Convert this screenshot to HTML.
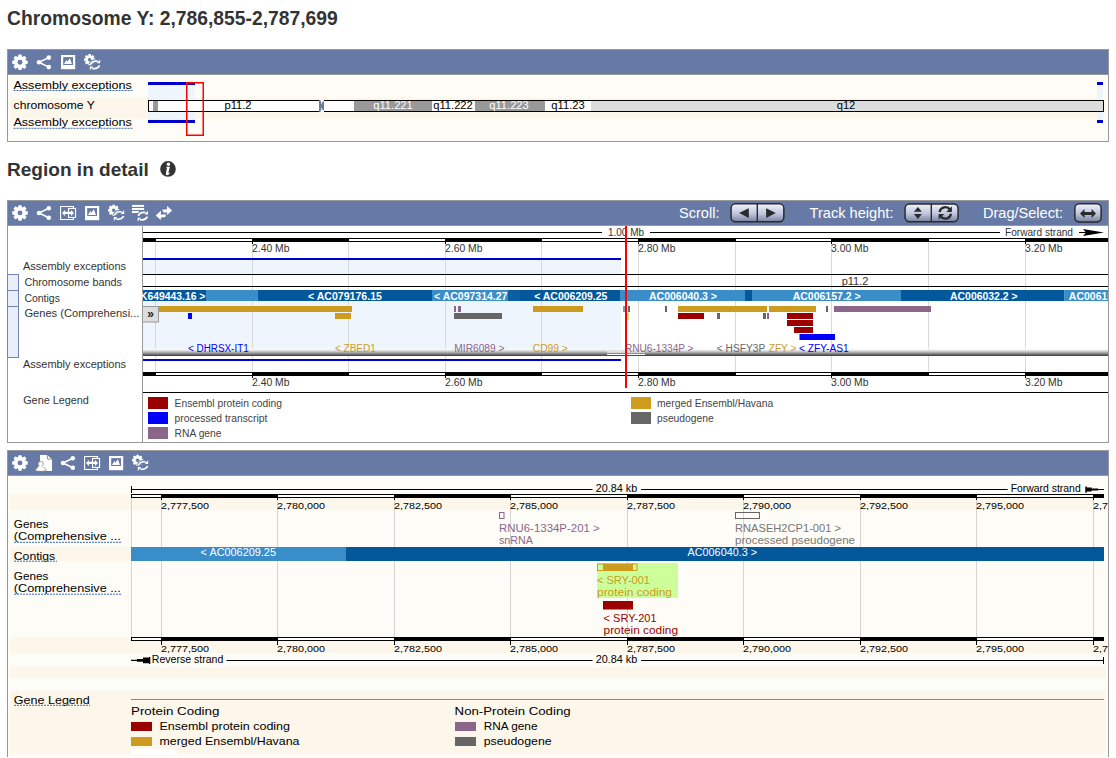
<!DOCTYPE html><html><head><meta charset="utf-8"><style>html,body{margin:0;padding:0;width:1116px;height:758px;overflow:hidden;background:#fff}</style></head><body><svg width="1116" height="758" viewBox="0 0 1116 758" style="position:absolute;left:0;top:0">
<rect x="0" y="0" width="1116" height="758" fill="#fff" />
<text x="7.1" y="25" font-family="Liberation Sans" font-size="19.4" font-weight="bold" fill="#333" text-anchor="start" textLength="330.7" lengthAdjust="spacingAndGlyphs" >Chromosome Y: 2,786,855-2,787,699</text>
<rect x="7" y="49" width="1102" height="93" fill="#999" />
<rect x="8" y="50" width="1100" height="24" fill="#677aa5" />
<rect x="8" y="75" width="1100" height="66" fill="#fefcf6" />
<rect x="10" y="98" width="1095" height="21" fill="#fdf6ea" />
<polygon points="27.74,60.73 27.74,63.87 25.32,64.30 25.18,64.65 26.58,66.66 24.36,68.88 22.35,67.48 22.00,67.62 21.57,70.04 18.43,70.04 18.00,67.62 17.65,67.48 15.64,68.88 13.42,66.66 14.82,64.65 14.68,64.30 12.26,63.87 12.26,60.73 14.68,60.30 14.82,59.95 13.42,57.94 15.64,55.72 17.65,57.12 18.00,56.98 18.43,54.56 21.57,54.56 22.00,56.98 22.35,57.12 24.36,55.72 26.58,57.94 25.18,59.95 25.32,60.30" fill="#fff"/>
<circle cx="20" cy="62.3" r="5.85" fill="#fff"/>
<circle cx="20" cy="62.3" r="2.45" fill="#677aa5"/>
<g fill="#fff"><line x1="39" y1="62.3" x2="48.8" y2="57.599999999999994" stroke="#fff" stroke-width="1.6"/><line x1="39" y1="62.3" x2="48.8" y2="67.1" stroke="#fff" stroke-width="1.6"/><circle cx="39" cy="62.3" r="2.3"/><circle cx="48.8" cy="57.599999999999994" r="2.3"/><circle cx="48.8" cy="67.1" r="2.3"/></g>
<rect x="61" y="55" width="14.2" height="14.2" fill="#fff"/>
<rect x="63.2" y="57.1" width="9.8" height="7.9" fill="#677aa5"/>
<polygon points="64,63.9 66.4,59.9 67.3,61.8 69.9,58.2 71.9,63.9" fill="#fff"/>
<polygon points="95.24,58.52 95.24,60.78 93.49,61.10 93.39,61.34 94.40,62.80 92.80,64.40 91.34,63.39 91.10,63.49 90.78,65.24 88.52,65.24 88.20,63.49 87.96,63.39 86.50,64.40 84.90,62.80 85.91,61.34 85.81,61.10 84.06,60.78 84.06,58.52 85.81,58.20 85.91,57.96 84.90,56.50 86.50,54.90 87.96,55.91 88.20,55.81 88.52,54.06 90.78,54.06 91.10,55.81 91.34,55.91 92.80,54.90 94.40,56.50 93.39,57.96 93.49,58.20" fill="#fff"/>
<circle cx="89.65" cy="59.65" r="4.22" fill="#fff"/>
<circle cx="89.65" cy="59.65" r="1.77" fill="#677aa5"/>
<path d="M90.4,64.6 Q92.4,60.199999999999996 97.8,61.4 M99.6,65.39999999999999 Q97.6,69.6 92.2,68.39999999999999" fill="none" stroke="#677aa5" stroke-width="3.6"/>
<path d="M90.4,64.6 Q92.4,60.199999999999996 97.8,61.4 M99.6,65.39999999999999 Q97.6,69.6 92.2,68.39999999999999" fill="none" stroke="#fff" stroke-width="1.7"/>
<polygon points="96.8,63.3 100.2,63.3 100.2,59.5" fill="#fff"/>
<polygon points="93.2,66.5 89.8,66.5 89.8,70.3" fill="#fff"/>
<g>
<text x="13.4" y="88.7" font-family="Liberation Sans" font-size="10.9" font-weight="normal" fill="#000" text-anchor="start" textLength="118.5" lengthAdjust="spacingAndGlyphs" >Assembly exceptions</text>
<text x="13.6" y="108.5" font-family="Liberation Sans" font-size="10.9" font-weight="normal" fill="#000" text-anchor="start" textLength="81.2" lengthAdjust="spacingAndGlyphs" >chromosome Y</text>
<text x="13.4" y="126.4" font-family="Liberation Sans" font-size="10.9" font-weight="normal" fill="#000" text-anchor="start" textLength="118.5" lengthAdjust="spacingAndGlyphs" >Assembly exceptions</text>
</g>
<line x1="13.5" y1="90.5" x2="132.5" y2="90.5" stroke="#3d6bb0" stroke-width="1" stroke-dasharray="2,1"/>
<line x1="13.5" y1="128.3" x2="132.5" y2="128.3" stroke="#3d6bb0" stroke-width="1" stroke-dasharray="2,1"/>
<rect x="148" y="82" width="47" height="41" fill="#eef5fd" />
<rect x="148" y="82" width="47" height="3" fill="#0000cc" />
<rect x="148" y="120" width="47" height="3" fill="#0000cc" />
<rect x="1097" y="82" width="6" height="41" fill="#eef5fd" />
<rect x="1097" y="82" width="6" height="3" fill="#0000cc" />
<rect x="1097" y="120" width="6" height="3" fill="#0000cc" />
<rect x="148" y="100" width="171" height="12" fill="#fff" />
<rect x="153" y="101" width="5" height="10" fill="#999" />
<rect x="323" y="100" width="31" height="12" fill="#fff" />
<rect x="354" y="101" width="78" height="10" fill="#999" />
<rect x="432" y="101" width="43" height="10" fill="#fff" />
<rect x="475" y="101" width="70" height="10" fill="#999" />
<rect x="545" y="101" width="46" height="10" fill="#fff" />
<rect x="591" y="101" width="513" height="10" fill="#dcdcdc" />
<rect x="148" y="100" width="171" height="1" fill="#000" />
<rect x="148" y="111" width="171" height="1" fill="#000" />
<rect x="148" y="100" width="1" height="12" fill="#000" />
<rect x="324" y="100" width="780" height="1" fill="#000" />
<rect x="324" y="111" width="780" height="1" fill="#000" />
<rect x="1103" y="100" width="1" height="12" fill="#000" />
<polygon points="319,100 320.4,100 321.6,104.6 322.8,101.2 324,101.2 324,110.6 322.8,110.6 321.6,107.4 320.4,112 319,112" fill="#6a7d9c"/>
<text x="238" y="109.3" font-family="Liberation Sans" font-size="11.2" font-weight="normal" fill="#000" text-anchor="middle" >p11.2</text>
<text x="393" y="109.3" font-family="Liberation Sans" font-size="11.2" font-weight="normal" fill="#fff" text-anchor="middle" >q11.221</text>
<text x="453" y="109.3" font-family="Liberation Sans" font-size="11.2" font-weight="normal" fill="#000" text-anchor="middle" >q11.222</text>
<text x="509" y="109.3" font-family="Liberation Sans" font-size="11.2" font-weight="normal" fill="#fff" text-anchor="middle" >q11.223</text>
<text x="568" y="109.3" font-family="Liberation Sans" font-size="11.2" font-weight="normal" fill="#000" text-anchor="middle" >q11.23</text>
<text x="846" y="109.3" font-family="Liberation Sans" font-size="11.2" font-weight="normal" fill="#000" text-anchor="middle" >q12</text>
<rect x="186.75" y="82.75" width="16.5" height="52.5" fill="none" stroke="#f00" stroke-width="1.5"/>
<text x="7.0" y="176" font-family="Liberation Sans" font-size="19" font-weight="bold" fill="#333" text-anchor="start" textLength="141.8" lengthAdjust="spacingAndGlyphs" >Region in detail</text>
<circle cx="168" cy="168.9" r="7.8" fill="#333"/>
<circle cx="168.4" cy="164.2" r="1.7" fill="#fff"/>
<path d="M166.6,166.7 H169.9 L168.4,172.6 Q168.6,173.3 169.8,172.4 L169.4,174.1 Q167.6,175.7 166.3,175.1 Q165.6,174.6 165.9,173.4 L166.9,168.2 Q166.9,167.7 166.3,167.7 Z" fill="#fff"/>
<rect x="7" y="200" width="1102" height="243" fill="#999" />
<rect x="8" y="201" width="1100" height="24" fill="#677aa5" />
<rect x="8" y="226" width="1100" height="216" fill="#fff" />
<rect x="142" y="226" width="1" height="216" fill="#999" />
<polygon points="27.74,211.33 27.74,214.47 25.32,214.90 25.18,215.25 26.58,217.26 24.36,219.48 22.35,218.08 22.00,218.22 21.57,220.64 18.43,220.64 18.00,218.22 17.65,218.08 15.64,219.48 13.42,217.26 14.82,215.25 14.68,214.90 12.26,214.47 12.26,211.33 14.68,210.90 14.82,210.55 13.42,208.54 15.64,206.32 17.65,207.72 18.00,207.58 18.43,205.16 21.57,205.16 22.00,207.58 22.35,207.72 24.36,206.32 26.58,208.54 25.18,210.55 25.32,210.90" fill="#fff"/>
<circle cx="20" cy="212.9" r="5.85" fill="#fff"/>
<circle cx="20" cy="212.9" r="2.45" fill="#677aa5"/>
<g fill="#fff"><line x1="39" y1="213" x2="48.8" y2="208.3" stroke="#fff" stroke-width="1.6"/><line x1="39" y1="213" x2="48.8" y2="217.8" stroke="#fff" stroke-width="1.6"/><circle cx="39" cy="213" r="2.3"/><circle cx="48.8" cy="208.3" r="2.3"/><circle cx="48.8" cy="217.8" r="2.3"/></g>
<path d="M73.45,208 V206.55 H60.55 V219.45 H73.45 V218" fill="none" stroke="#fff" stroke-width="1.1"/>
<rect x="68.55" y="208.45" width="7" height="9" fill="#677aa5" stroke="#fff" stroke-width="1.1"/>
<polygon points="62,212.9 65,209.9 65,211.7 71,211.7 71,209.9 74,212.9 71,215.9 71,214.1 65,214.1 65,215.9" fill="#fff"/>
<rect x="85" y="206" width="14.2" height="14.2" fill="#fff"/>
<rect x="87.2" y="208.1" width="9.8" height="7.9" fill="#677aa5"/>
<polygon points="88,214.9 90.4,210.9 91.3,212.8 93.9,209.2 95.9,214.9" fill="#fff"/>
<polygon points="119.24,209.12 119.24,211.38 117.49,211.70 117.39,211.94 118.40,213.40 116.80,215.00 115.34,213.99 115.10,214.09 114.78,215.84 112.52,215.84 112.20,214.09 111.96,213.99 110.50,215.00 108.90,213.40 109.91,211.94 109.81,211.70 108.06,211.38 108.06,209.12 109.81,208.80 109.91,208.56 108.90,207.10 110.50,205.50 111.96,206.51 112.20,206.41 112.52,204.66 114.78,204.66 115.10,206.41 115.34,206.51 116.80,205.50 118.40,207.10 117.39,208.56 117.49,208.80" fill="#fff"/>
<circle cx="113.65" cy="210.25" r="4.22" fill="#fff"/>
<circle cx="113.65" cy="210.25" r="1.77" fill="#677aa5"/>
<path d="M114.4,215.20000000000002 Q116.4,210.8 121.8,212.0 M123.6,216.0 Q121.6,220.20000000000002 116.2,219.0" fill="none" stroke="#677aa5" stroke-width="3.6"/>
<path d="M114.4,215.20000000000002 Q116.4,210.8 121.8,212.0 M123.6,216.0 Q121.6,220.20000000000002 116.2,219.0" fill="none" stroke="#fff" stroke-width="1.7"/>
<polygon points="120.8,213.9 124.2,213.9 124.2,210.1" fill="#fff"/>
<polygon points="117.2,217.1 113.8,217.1 113.8,220.9" fill="#fff"/>
<rect x="131.9" y="204.9" width="12.2" height="2" fill="#fff" />
<rect x="131.9" y="208.0" width="12.2" height="2" fill="#fff" />
<rect x="131.9" y="211.0" width="7.2" height="2" fill="#fff" />
<path d="M138.20000000000002,215.8 Q140.20000000000002,211.4 145.60000000000002,212.6 M147.4,216.6 Q145.4,220.8 140.0,219.6" fill="none" stroke="#677aa5" stroke-width="3.6"/>
<path d="M138.20000000000002,215.8 Q140.20000000000002,211.4 145.60000000000002,212.6 M147.4,216.6 Q145.4,220.8 140.0,219.6" fill="none" stroke="#fff" stroke-width="1.7"/>
<polygon points="144.60000000000002,214.5 148.0,214.5 148.0,210.7" fill="#fff"/>
<polygon points="141.0,217.7 137.60000000000002,217.7 137.60000000000002,221.5" fill="#fff"/>
<polygon points="162.0,209.8 167.1,209.3 167.1,205.9 172.1,210.4 167.1,214.9 167.1,212.20000000000002 163.89999999999998,212.70000000000002" fill="#fff"/>
<polygon points="165.79999999999998,214.20000000000002 160.89999999999998,214.70000000000002 160.89999999999998,210.8 155.7,215.5 160.89999999999998,220.0 160.89999999999998,217.5 165.5,217.0" fill="#fff"/>
<text x="679" y="217.7" font-family="Liberation Sans" font-size="14.5" font-weight="normal" fill="#fff" text-anchor="start" textLength="40.5" lengthAdjust="spacingAndGlyphs" >Scroll:</text>
<defs><linearGradient id="bg730" x1="0" y1="0" x2="0" y2="1"><stop offset="0" stop-color="#f7f8fc"/><stop offset="0.15" stop-color="#e2e5f3"/><stop offset="0.55" stop-color="#bfc5dc"/><stop offset="1" stop-color="#76809f"/></linearGradient></defs>
<rect x="731.05" y="203.85" width="52.8" height="18.0" rx="4.5" fill="url(#bg730)" stroke="#2b2b2b" stroke-width="1.5"/>
<rect x="756.6" y="203.8" width="1.4" height="18.2" fill="#2b2b2b" />
<polygon points="739.1,212.9 748.8,208.2 748.8,217.9" fill="#2b2b2b"/>
<polygon points="775.8,212.9 766.1,208.2 766.1,217.9" fill="#2b2b2b"/>
<text x="809.5" y="217.7" font-family="Liberation Sans" font-size="14.5" font-weight="normal" fill="#fff" text-anchor="start" textLength="84" lengthAdjust="spacingAndGlyphs" >Track height:</text>
<defs><linearGradient id="bg904" x1="0" y1="0" x2="0" y2="1"><stop offset="0" stop-color="#f7f8fc"/><stop offset="0.15" stop-color="#e2e5f3"/><stop offset="0.55" stop-color="#bfc5dc"/><stop offset="1" stop-color="#76809f"/></linearGradient></defs>
<rect x="905.05" y="203.95" width="53.0" height="17.8" rx="4.5" fill="url(#bg904)" stroke="#2b2b2b" stroke-width="1.5"/>
<rect x="930.6" y="203.9" width="1.4" height="18" fill="#2b2b2b" />
<polygon points="917.9,206.9 921.9,211.8 913.9,211.8" fill="#2b2b2b"/><polygon points="917.9,218.9 921.9,214 913.9,214" fill="#2b2b2b"/>
<path d="M939.6,212 A5.8,5.8 0 0 1 950,209.5 M951,213.8 A5.8,5.8 0 0 1 940.6,216.3" fill="none" stroke="#2b2b2b" stroke-width="2.3"/>
<polygon points="951.9,206.3 951.9,211.9 946.3,211.9" fill="#2b2b2b"/><polygon points="938.6,219.7 938.6,214.1 944.2,214.1" fill="#2b2b2b"/>
<text x="983" y="217.7" font-family="Liberation Sans" font-size="14.5" font-weight="normal" fill="#fff" text-anchor="start" textLength="80" lengthAdjust="spacingAndGlyphs" >Drag/Select:</text>
<defs><linearGradient id="bg1074" x1="0" y1="0" x2="0" y2="1"><stop offset="0" stop-color="#f7f8fc"/><stop offset="0.15" stop-color="#e2e5f3"/><stop offset="0.55" stop-color="#bfc5dc"/><stop offset="1" stop-color="#76809f"/></linearGradient></defs>
<rect x="1074.85" y="203.75" width="26.3" height="18.2" rx="4.5" fill="url(#bg1074)" stroke="#2b2b2b" stroke-width="1.5"/>
<polygon points="1080,213.4 1084.5,208.9 1084.5,211.9 1091.6,211.9 1091.6,208.9 1096,213.4 1091.6,217.9 1091.6,214.9 1084.5,214.9 1084.5,217.9" fill="#2b2b2b"/>
<rect x="7.5" y="274.5" width="11" height="16" fill="#eaeefb" stroke="#6f84b5" stroke-width="1"/>
<rect x="7.5" y="290.5" width="11" height="16" fill="#eaeefb" stroke="#6f84b5" stroke-width="1"/>
<rect x="7.5" y="306.5" width="11" height="51" fill="#eaeefb" stroke="#6f84b5" stroke-width="1"/>
<text x="23" y="269.6" font-family="Liberation Sans" font-size="11" font-weight="normal" fill="#333" text-anchor="start" textLength="103" lengthAdjust="spacingAndGlyphs" >Assembly exceptions</text>
<text x="24.4" y="285.5" font-family="Liberation Sans" font-size="11" font-weight="normal" fill="#333" text-anchor="start" textLength="97.5" lengthAdjust="spacingAndGlyphs" >Chromosome bands</text>
<text x="24.4" y="301.6" font-family="Liberation Sans" font-size="11" font-weight="normal" fill="#333" text-anchor="start" textLength="35.5" lengthAdjust="spacingAndGlyphs" >Contigs</text>
<text x="24.4" y="317.3" font-family="Liberation Sans" font-size="11.1" font-weight="normal" fill="#333" text-anchor="start" textLength="115" lengthAdjust="spacingAndGlyphs" >Genes (Comprehensi...</text>
<text x="23" y="367.6" font-family="Liberation Sans" font-size="11" font-weight="normal" fill="#333" text-anchor="start" textLength="103" lengthAdjust="spacingAndGlyphs" >Assembly exceptions</text>
<text x="23.2" y="404" font-family="Liberation Sans" font-size="11" font-weight="normal" fill="#333" text-anchor="start" textLength="65.7" lengthAdjust="spacingAndGlyphs" >Gene Legend</text>
<rect x="143" y="260" width="478" height="14" fill="#eef5fd" />
<rect x="143" y="301" width="478" height="51" fill="#eef5fd" />
<rect x="155" y="242" width="1" height="130" fill="#d9d9d9" />
<rect x="252" y="242" width="1" height="130" fill="#d9d9d9" />
<rect x="348" y="242" width="1" height="130" fill="#d9d9d9" />
<rect x="445" y="242" width="1" height="130" fill="#d9d9d9" />
<rect x="541" y="242" width="1" height="130" fill="#d9d9d9" />
<rect x="638" y="242" width="1" height="130" fill="#d9d9d9" />
<rect x="735" y="242" width="1" height="130" fill="#d9d9d9" />
<rect x="831" y="242" width="1" height="130" fill="#d9d9d9" />
<rect x="928" y="242" width="1" height="130" fill="#d9d9d9" />
<rect x="1025" y="242" width="1" height="130" fill="#d9d9d9" />
<rect x="143" y="232" width="459" height="1" fill="#000" />
<rect x="650" y="232" width="350" height="1" fill="#000" />
<text x="626" y="236" font-family="Liberation Sans" font-size="10" font-weight="normal" fill="#333" text-anchor="middle" textLength="36" lengthAdjust="spacingAndGlyphs" >1.00 Mb</text>
<text x="1005" y="236" font-family="Liberation Sans" font-size="10" font-weight="normal" fill="#333" text-anchor="start" textLength="68" lengthAdjust="spacingAndGlyphs" >Forward strand</text>
<rect x="1079" y="232" width="10" height="1" fill="#000" />
<polygon points="1083,229 1104,232.5 1083,236 1086,232.5" fill="#000"/>
<rect x="143" y="238" width="12" height="4" fill="#000" />
<rect x="155" y="238" width="97" height="4" fill="#000" />
<rect x="156" y="239" width="96" height="2" fill="#fff" />
<rect x="252" y="238" width="96" height="4" fill="#000" />
<rect x="348" y="238" width="97" height="4" fill="#000" />
<rect x="349" y="239" width="96" height="2" fill="#fff" />
<rect x="445" y="238" width="96" height="4" fill="#000" />
<rect x="541" y="238" width="97" height="4" fill="#000" />
<rect x="542" y="239" width="96" height="2" fill="#fff" />
<rect x="638" y="238" width="97" height="4" fill="#000" />
<rect x="735" y="238" width="96" height="4" fill="#000" />
<rect x="736" y="239" width="95" height="2" fill="#fff" />
<rect x="831" y="238" width="97" height="4" fill="#000" />
<rect x="928" y="238" width="97" height="4" fill="#000" />
<rect x="929" y="239" width="96" height="2" fill="#fff" />
<rect x="1025" y="238" width="83" height="4" fill="#000" />
<rect x="252" y="242" width="1" height="2" fill="#000" />
<rect x="445" y="242" width="1" height="2" fill="#000" />
<rect x="638" y="242" width="1" height="2" fill="#000" />
<rect x="831" y="242" width="1" height="2" fill="#000" />
<rect x="1025" y="242" width="1" height="2" fill="#000" />
<text x="252" y="251.8" font-family="Liberation Sans" font-size="10.2" font-weight="normal" fill="#333" text-anchor="start" textLength="37.5" lengthAdjust="spacingAndGlyphs" >2.40 Mb</text>
<text x="445" y="251.8" font-family="Liberation Sans" font-size="10.2" font-weight="normal" fill="#333" text-anchor="start" textLength="37.5" lengthAdjust="spacingAndGlyphs" >2.60 Mb</text>
<text x="638" y="251.8" font-family="Liberation Sans" font-size="10.2" font-weight="normal" fill="#333" text-anchor="start" textLength="37.5" lengthAdjust="spacingAndGlyphs" >2.80 Mb</text>
<text x="831" y="251.8" font-family="Liberation Sans" font-size="10.2" font-weight="normal" fill="#333" text-anchor="start" textLength="37.5" lengthAdjust="spacingAndGlyphs" >3.00 Mb</text>
<text x="1025" y="251.8" font-family="Liberation Sans" font-size="10.2" font-weight="normal" fill="#333" text-anchor="start" textLength="37.5" lengthAdjust="spacingAndGlyphs" >3.20 Mb</text>
<rect x="143" y="258" width="478" height="2" fill="#0000cc" />
<rect x="143" y="274" width="965" height="1" fill="#000" />
<text x="855" y="284.5" font-family="Liberation Sans" font-size="11" font-weight="normal" fill="#333" text-anchor="middle" >p11.2</text>
<rect x="143" y="286" width="965" height="1" fill="#000" />
<rect x="143" y="290" width="63" height="11" fill="#03589c" />
<rect x="206" y="290" width="51.5" height="11" fill="#398ec9" />
<rect x="257.5" y="290" width="174.5" height="11" fill="#03589c" />
<rect x="432" y="290" width="76" height="11" fill="#398ec9" />
<rect x="508" y="290" width="12" height="11" fill="#0a5fa3" />
<rect x="520" y="290" width="100" height="11" fill="#03589c" />
<rect x="620" y="290" width="125" height="11" fill="#398ec9" />
<rect x="745" y="290" width="7" height="11" fill="#03589c" />
<rect x="752" y="290" width="149" height="11" fill="#398ec9" />
<rect x="901" y="290" width="163.5999999999999" height="11" fill="#03589c" />
<rect x="1064.6" y="290" width="43.40000000000009" height="11" fill="#398ec9" />
<text x="140" y="299.5" font-family="Liberation Sans" font-size="10.6" font-weight="bold" fill="#fff" text-anchor="start" textLength="65.4" lengthAdjust="spacingAndGlyphs" >K649443.16 &gt;</text>
<text x="308" y="299.5" font-family="Liberation Sans" font-size="10.6" font-weight="bold" fill="#fff" text-anchor="start" textLength="73.9" lengthAdjust="spacingAndGlyphs" >&lt; AC079176.15</text>
<text x="434" y="299.5" font-family="Liberation Sans" font-size="10.6" font-weight="bold" fill="#fff" text-anchor="start" textLength="73.4" lengthAdjust="spacingAndGlyphs" >&lt; AC097314.27</text>
<text x="534.2" y="299.5" font-family="Liberation Sans" font-size="10.6" font-weight="bold" fill="#fff" text-anchor="start" textLength="73.2" lengthAdjust="spacingAndGlyphs" >&lt; AC006209.25</text>
<text x="649" y="299.5" font-family="Liberation Sans" font-size="10.6" font-weight="bold" fill="#fff" text-anchor="start" textLength="68" lengthAdjust="spacingAndGlyphs" >AC006040.3 &gt;</text>
<text x="792.7" y="299.5" font-family="Liberation Sans" font-size="10.6" font-weight="bold" fill="#fff" text-anchor="start" textLength="68" lengthAdjust="spacingAndGlyphs" >AC006157.2 &gt;</text>
<text x="950" y="299.5" font-family="Liberation Sans" font-size="10.6" font-weight="bold" fill="#fff" text-anchor="start" textLength="67.6" lengthAdjust="spacingAndGlyphs" >AC006032.2 &gt;</text>
<text x="1068.8" y="299.5" font-family="Liberation Sans" font-size="10.6" font-weight="bold" fill="#fff" text-anchor="start" textLength="68" lengthAdjust="spacingAndGlyphs" >AC006157.2 &gt;</text>
<rect x="1108" y="288" width="1" height="15" fill="#999" />
<rect x="1109" y="288" width="7" height="15" fill="#fff" />
<rect x="138" y="288" width="4" height="15" fill="#fff" />
<rect x="159" y="306" width="193" height="6" fill="#cd9b1d" />
<rect x="335" y="313" width="16" height="6" fill="#cd9b1d" />
<rect x="188" y="313" width="4" height="6" fill="#0000ff" />
<rect x="454" y="306" width="2" height="6" fill="#8b668b" />
<rect x="458" y="306" width="3" height="6" fill="#8b668b" />
<rect x="454" y="313" width="48" height="6" fill="#666666" />
<rect x="533" y="306" width="50" height="6" fill="#cd9b1d" />
<rect x="623" y="306" width="3" height="6" fill="#a08aa8" />
<rect x="628" y="306" width="2" height="6" fill="#666666" />
<rect x="627" y="313" width="2" height="7" fill="#c8f57a" />
<rect x="665" y="306" width="2" height="6" fill="#666666" />
<rect x="678" y="306" width="89" height="6" fill="#cd9b1d" />
<rect x="769" y="306" width="47" height="6" fill="#cd9b1d" />
<rect x="678" y="313" width="26" height="6" fill="#9b0000" />
<rect x="717" y="313" width="3" height="6" fill="#666666" />
<rect x="763" y="313" width="3" height="6" fill="#666666" />
<rect x="767" y="313" width="2" height="6" fill="#8b668b" />
<rect x="787" y="313" width="26" height="6" fill="#9b0000" />
<rect x="787" y="320" width="26" height="6" fill="#9b0000" />
<rect x="794" y="327" width="19" height="6" fill="#9b0000" />
<rect x="799.5" y="334" width="35.5" height="6" fill="#0000ff" />
<rect x="826" y="306" width="2" height="6" fill="#666666" />
<rect x="834" y="306" width="97" height="6" fill="#8b668b" />
<rect x="142.5" y="306.5" width="16" height="15.5" fill="#ddd" stroke="#999" stroke-width="1"/>
<text x="150.5" y="318.2" font-family="Liberation Sans" font-size="12" font-weight="bold" fill="#222" text-anchor="middle" >»</text>
<defs><linearGradient id="shd" x1="0" y1="0" x2="0" y2="1"><stop offset="0" stop-color="#fff" stop-opacity="0"/><stop offset="0.3" stop-color="#f4f4f4" stop-opacity="0.9"/><stop offset="0.55" stop-color="#bbb"/><stop offset="0.8" stop-color="#777"/><stop offset="0.92" stop-color="#444"/><stop offset="1" stop-color="#555"/></linearGradient></defs>
<rect x="143" y="347" width="965" height="9" fill="url(#shd)" />
<rect x="607" y="351.5" width="38" height="1" fill="#fff" />
<rect x="607" y="354" width="38" height="1" fill="#fff" />
<text x="188" y="351.5" font-family="Liberation Sans" font-size="10" font-weight="normal" fill="#0000ff" text-anchor="start" textLength="60.7" lengthAdjust="spacingAndGlyphs" >&lt; DHRSX-IT1</text>
<text x="335" y="351.5" font-family="Liberation Sans" font-size="10" font-weight="normal" fill="#cd9b1d" text-anchor="start" textLength="40.8" lengthAdjust="spacingAndGlyphs" >&lt; ZBED1</text>
<text x="454.3" y="351.5" font-family="Liberation Sans" font-size="10" font-weight="normal" fill="#8b668b" text-anchor="start" textLength="50.2" lengthAdjust="spacingAndGlyphs" >MIR6089 &gt;</text>
<text x="532.8" y="351.5" font-family="Liberation Sans" font-size="10" font-weight="normal" fill="#cd9b1d" text-anchor="start" textLength="34.8" lengthAdjust="spacingAndGlyphs" >CD99 &gt;</text>
<text x="625" y="351.5" font-family="Liberation Sans" font-size="10" font-weight="normal" fill="#8b668b" text-anchor="start" textLength="68.5" lengthAdjust="spacingAndGlyphs" >RNU6-1334P &gt;</text>
<text x="716.8" y="351.5" font-family="Liberation Sans" font-size="10" font-weight="normal" fill="#666666" text-anchor="start" textLength="48.4" lengthAdjust="spacingAndGlyphs" >&lt; HSFY3P</text>
<text x="768.7" y="351.5" font-family="Liberation Sans" font-size="10" font-weight="normal" fill="#cd9b1d" text-anchor="start" textLength="27.8" lengthAdjust="spacingAndGlyphs" >ZFY &gt;</text>
<text x="799" y="351.5" font-family="Liberation Sans" font-size="10" font-weight="normal" fill="#0000ff" text-anchor="start" textLength="49.7" lengthAdjust="spacingAndGlyphs" >&lt; ZFY-AS1</text>
<rect x="143" y="359" width="478" height="2" fill="#0000cc" />
<rect x="143" y="372" width="12" height="4" fill="#000" />
<rect x="155" y="372" width="97" height="4" fill="#000" />
<rect x="156" y="373" width="96" height="2" fill="#fff" />
<rect x="252" y="372" width="96" height="4" fill="#000" />
<rect x="348" y="372" width="97" height="4" fill="#000" />
<rect x="349" y="373" width="96" height="2" fill="#fff" />
<rect x="445" y="372" width="96" height="4" fill="#000" />
<rect x="541" y="372" width="97" height="4" fill="#000" />
<rect x="542" y="373" width="96" height="2" fill="#fff" />
<rect x="638" y="372" width="97" height="4" fill="#000" />
<rect x="735" y="372" width="96" height="4" fill="#000" />
<rect x="736" y="373" width="95" height="2" fill="#fff" />
<rect x="831" y="372" width="97" height="4" fill="#000" />
<rect x="928" y="372" width="97" height="4" fill="#000" />
<rect x="929" y="373" width="96" height="2" fill="#fff" />
<rect x="1025" y="372" width="83" height="4" fill="#000" />
<rect x="252" y="376" width="1" height="2" fill="#000" />
<rect x="445" y="376" width="1" height="2" fill="#000" />
<rect x="638" y="376" width="1" height="2" fill="#000" />
<rect x="831" y="376" width="1" height="2" fill="#000" />
<rect x="1025" y="376" width="1" height="2" fill="#000" />
<text x="252" y="385.8" font-family="Liberation Sans" font-size="10.2" font-weight="normal" fill="#333" text-anchor="start" textLength="37.5" lengthAdjust="spacingAndGlyphs" >2.40 Mb</text>
<text x="445" y="385.8" font-family="Liberation Sans" font-size="10.2" font-weight="normal" fill="#333" text-anchor="start" textLength="37.5" lengthAdjust="spacingAndGlyphs" >2.60 Mb</text>
<text x="638" y="385.8" font-family="Liberation Sans" font-size="10.2" font-weight="normal" fill="#333" text-anchor="start" textLength="37.5" lengthAdjust="spacingAndGlyphs" >2.80 Mb</text>
<text x="831" y="385.8" font-family="Liberation Sans" font-size="10.2" font-weight="normal" fill="#333" text-anchor="start" textLength="37.5" lengthAdjust="spacingAndGlyphs" >3.00 Mb</text>
<text x="1025" y="385.8" font-family="Liberation Sans" font-size="10.2" font-weight="normal" fill="#333" text-anchor="start" textLength="37.5" lengthAdjust="spacingAndGlyphs" >3.20 Mb</text>
<rect x="143" y="392" width="965" height="1" fill="#000" />
<rect x="625" y="226" width="2" height="162" fill="#f00" />
<rect x="148" y="397" width="20" height="12" fill="#9b0000" />
<text x="174.6" y="406.6" font-family="Liberation Sans" font-size="10.3" font-weight="normal" fill="#444" text-anchor="start" textLength="107.4" lengthAdjust="spacingAndGlyphs" >Ensembl protein coding</text>
<rect x="148" y="412" width="20" height="12" fill="#0000ff" />
<text x="174.6" y="421.6" font-family="Liberation Sans" font-size="10.3" font-weight="normal" fill="#444" text-anchor="start" >processed transcript</text>
<rect x="148" y="427" width="20" height="12" fill="#8b668b" />
<text x="174.6" y="436.6" font-family="Liberation Sans" font-size="10.3" font-weight="normal" fill="#444" text-anchor="start" >RNA gene</text>
<rect x="631" y="397" width="20" height="12" fill="#cd9b1d" />
<text x="657" y="406.6" font-family="Liberation Sans" font-size="10.3" font-weight="normal" fill="#444" text-anchor="start" >merged Ensembl/Havana</text>
<rect x="631" y="412" width="20" height="12" fill="#666666" />
<text x="657" y="421.6" font-family="Liberation Sans" font-size="10.3" font-weight="normal" fill="#444" text-anchor="start" >pseudogene</text>
<rect x="7" y="450" width="1102" height="307" fill="#999" />
<rect x="8" y="451" width="1100" height="24" fill="#677aa5" />
<rect x="8" y="476" width="1100" height="281" fill="#fefcf6" />
<polygon points="27.74,461.33 27.74,464.47 25.32,464.90 25.18,465.25 26.58,467.26 24.36,469.48 22.35,468.08 22.00,468.22 21.57,470.64 18.43,470.64 18.00,468.22 17.65,468.08 15.64,469.48 13.42,467.26 14.82,465.25 14.68,464.90 12.26,464.47 12.26,461.33 14.68,460.90 14.82,460.55 13.42,458.54 15.64,456.32 17.65,457.72 18.00,457.58 18.43,455.16 21.57,455.16 22.00,457.58 22.35,457.72 24.36,456.32 26.58,458.54 25.18,460.55 25.32,460.90" fill="#fff"/>
<circle cx="20" cy="462.9" r="5.85" fill="#fff"/>
<circle cx="20" cy="462.9" r="2.45" fill="#677aa5"/>
<path d="M40,455 H47.2 L52,459.3 V471 H40 Z" fill="#fff"/>
<path d="M47.4,455.2 V459.1 H51.8" fill="none" stroke="#888" stroke-width="0.9"/>
<path d="M35.6,471 Q35.6,466.9 40.75,466.9 Q45.9,466.9 45.9,471 Z" fill="#fff" stroke="#8a8a8a" stroke-width="0.8"/>
<circle cx="40.75" cy="463.9" r="2.6" fill="#fff" stroke="#8a8a8a" stroke-width="0.8"/>
<rect x="38.2" y="466.2" width="5.1" height="4.6" fill="#fff"/>
<g fill="#fff"><line x1="63" y1="463" x2="72.8" y2="458.3" stroke="#fff" stroke-width="1.6"/><line x1="63" y1="463" x2="72.8" y2="467.8" stroke="#fff" stroke-width="1.6"/><circle cx="63" cy="463" r="2.3"/><circle cx="72.8" cy="458.3" r="2.3"/><circle cx="72.8" cy="467.8" r="2.3"/></g>
<path d="M97.45,458 V456.55 H84.55 V469.45 H97.45 V468" fill="none" stroke="#fff" stroke-width="1.1"/>
<rect x="92.55" y="458.45" width="7" height="9" fill="#677aa5" stroke="#fff" stroke-width="1.1"/>
<polygon points="86,462.9 89,459.9 89,461.7 95,461.7 95,459.9 98,462.9 95,465.9 95,464.1 89,464.1 89,465.9" fill="#fff"/>
<rect x="109" y="456" width="14.2" height="14.2" fill="#fff"/>
<rect x="111.2" y="458.1" width="9.8" height="7.9" fill="#677aa5"/>
<polygon points="112,464.9 114.4,460.9 115.3,462.8 117.9,459.2 119.9,464.9" fill="#fff"/>
<polygon points="143.24,459.12 143.24,461.38 141.49,461.70 141.39,461.94 142.40,463.40 140.80,465.00 139.34,463.99 139.10,464.09 138.78,465.84 136.52,465.84 136.20,464.09 135.96,463.99 134.50,465.00 132.90,463.40 133.91,461.94 133.81,461.70 132.06,461.38 132.06,459.12 133.81,458.80 133.91,458.56 132.90,457.10 134.50,455.50 135.96,456.51 136.20,456.41 136.52,454.66 138.78,454.66 139.10,456.41 139.34,456.51 140.80,455.50 142.40,457.10 141.39,458.56 141.49,458.80" fill="#fff"/>
<circle cx="137.65" cy="460.25" r="4.22" fill="#fff"/>
<circle cx="137.65" cy="460.25" r="1.77" fill="#677aa5"/>
<path d="M138.4,465.20000000000005 Q140.4,460.8 145.8,462.00000000000006 M147.6,466.00000000000006 Q145.6,470.20000000000005 140.2,469.00000000000006" fill="none" stroke="#677aa5" stroke-width="3.6"/>
<path d="M138.4,465.20000000000005 Q140.4,460.8 145.8,462.00000000000006 M147.6,466.00000000000006 Q145.6,470.20000000000005 140.2,469.00000000000006" fill="none" stroke="#fff" stroke-width="1.7"/>
<polygon points="144.8,463.90000000000003 148.2,463.90000000000003 148.2,460.1" fill="#fff"/>
<polygon points="141.2,467.1 137.8,467.1 137.8,470.90000000000003" fill="#fff"/>
<rect x="10" y="494" width="1083" height="16" fill="#fdf6ea" />
<rect x="10" y="547" width="121" height="14" fill="#fdf6ea" />
<rect x="10" y="637" width="1096" height="16" fill="#fdf6ea" />
<rect x="10" y="667" width="1096" height="11" fill="#fdf6ea" />
<rect x="10" y="691" width="1096" height="63" fill="#fdf6ea" />
<rect x="131" y="494" width="1" height="143" fill="#d4d4d4" />
<rect x="161" y="494" width="1" height="143" fill="#d4d4d4" />
<rect x="277" y="494" width="1" height="143" fill="#d4d4d4" />
<rect x="394" y="494" width="1" height="143" fill="#d4d4d4" />
<rect x="510" y="494" width="1" height="143" fill="#d4d4d4" />
<rect x="627" y="494" width="1" height="143" fill="#d4d4d4" />
<rect x="743" y="494" width="1" height="143" fill="#d4d4d4" />
<rect x="860" y="494" width="1" height="143" fill="#d4d4d4" />
<rect x="976" y="494" width="1" height="143" fill="#d4d4d4" />
<rect x="1093" y="494" width="1" height="143" fill="#d4d4d4" />
<rect x="131" y="489" width="461.5" height="1" fill="#000" />
<rect x="641" y="489" width="366.7" height="1" fill="#000" />
<rect x="131" y="486" width="1" height="7" fill="#000" />
<text x="595.8" y="491.5" font-family="Liberation Sans" font-size="10.4" font-weight="normal" fill="#000" text-anchor="start" textLength="41.5" lengthAdjust="spacingAndGlyphs" >20.84 kb</text>
<text x="1010.7" y="491.5" font-family="Liberation Sans" font-size="10.2" font-weight="normal" fill="#000" text-anchor="start" textLength="70" lengthAdjust="spacingAndGlyphs" >Forward strand</text>
<polygon points="1085.3,486.4 1086.8,486.4 1086.8,487.5 1091.6,487.5 1091.6,488.4 1098,488.4 1098,489 1104,489 1104,490 1098,490 1098,490.6 1091.6,490.6 1091.6,491.5 1086.8,491.5 1086.8,492.8 1085.3,492.8" fill="#000"/>
<rect x="131" y="494" width="30" height="4" fill="#000" />
<rect x="132" y="495" width="29" height="2" fill="#fff" />
<rect x="161" y="494" width="116" height="4" fill="#000" />
<rect x="277" y="494" width="117" height="4" fill="#000" />
<rect x="278" y="495" width="116" height="2" fill="#fff" />
<rect x="394" y="494" width="116" height="4" fill="#000" />
<rect x="510" y="494" width="117" height="4" fill="#000" />
<rect x="511" y="495" width="116" height="2" fill="#fff" />
<rect x="627" y="494" width="116" height="4" fill="#000" />
<rect x="743" y="494" width="117" height="4" fill="#000" />
<rect x="744" y="495" width="116" height="2" fill="#fff" />
<rect x="860" y="494" width="116" height="4" fill="#000" />
<rect x="976" y="494" width="117" height="4" fill="#000" />
<rect x="977" y="495" width="116" height="2" fill="#fff" />
<rect x="1093" y="494" width="11" height="4" fill="#000" />
<rect x="161" y="498" width="1" height="2" fill="#000" />
<text x="161" y="508.8" font-family="Liberation Sans" font-size="9.6" font-weight="normal" fill="#000" text-anchor="start" textLength="48" lengthAdjust="spacingAndGlyphs" >2,777,500</text>
<rect x="277" y="498" width="1" height="2" fill="#000" />
<text x="277" y="508.8" font-family="Liberation Sans" font-size="9.6" font-weight="normal" fill="#000" text-anchor="start" textLength="48" lengthAdjust="spacingAndGlyphs" >2,780,000</text>
<rect x="394" y="498" width="1" height="2" fill="#000" />
<text x="394" y="508.8" font-family="Liberation Sans" font-size="9.6" font-weight="normal" fill="#000" text-anchor="start" textLength="48" lengthAdjust="spacingAndGlyphs" >2,782,500</text>
<rect x="510" y="498" width="1" height="2" fill="#000" />
<text x="510" y="508.8" font-family="Liberation Sans" font-size="9.6" font-weight="normal" fill="#000" text-anchor="start" textLength="48" lengthAdjust="spacingAndGlyphs" >2,785,000</text>
<rect x="627" y="498" width="1" height="2" fill="#000" />
<text x="627" y="508.8" font-family="Liberation Sans" font-size="9.6" font-weight="normal" fill="#000" text-anchor="start" textLength="48" lengthAdjust="spacingAndGlyphs" >2,787,500</text>
<rect x="743" y="498" width="1" height="2" fill="#000" />
<text x="743" y="508.8" font-family="Liberation Sans" font-size="9.6" font-weight="normal" fill="#000" text-anchor="start" textLength="48" lengthAdjust="spacingAndGlyphs" >2,790,000</text>
<rect x="860" y="498" width="1" height="2" fill="#000" />
<text x="860" y="508.8" font-family="Liberation Sans" font-size="9.6" font-weight="normal" fill="#000" text-anchor="start" textLength="48" lengthAdjust="spacingAndGlyphs" >2,792,500</text>
<rect x="976" y="498" width="1" height="2" fill="#000" />
<text x="976" y="508.8" font-family="Liberation Sans" font-size="9.6" font-weight="normal" fill="#000" text-anchor="start" textLength="48" lengthAdjust="spacingAndGlyphs" >2,795,000</text>
<rect x="1093" y="498" width="1" height="2" fill="#000" />
<text x="1093" y="508.8" font-family="Liberation Sans" font-size="9.6" font-weight="normal" fill="#000" text-anchor="start" textLength="15" lengthAdjust="spacingAndGlyphs" >2,7</text>
<rect x="499.5" y="512.5" width="4.5" height="6" fill="none" stroke="#8b668b" stroke-width="1"/>
<text x="499" y="531.9" font-family="Liberation Sans" font-size="10.6" font-weight="normal" fill="#8b668b" text-anchor="start" textLength="100.7" lengthAdjust="spacingAndGlyphs" >RNU6-1334P-201 &gt;</text>
<text x="499" y="544.4" font-family="Liberation Sans" font-size="10.6" font-weight="normal" fill="#8b668b" text-anchor="start" textLength="33.9" lengthAdjust="spacingAndGlyphs" >snRNA</text>
<rect x="735.5" y="512.5" width="24" height="6" fill="none" stroke="#666" stroke-width="1"/>
<text x="735" y="531.5" font-family="Liberation Sans" font-size="10.6" font-weight="normal" fill="#777" text-anchor="start" textLength="106" lengthAdjust="spacingAndGlyphs" >RNASEH2CP1-001 &gt;</text>
<text x="735" y="544" font-family="Liberation Sans" font-size="10.6" font-weight="normal" fill="#777" text-anchor="start" textLength="120" lengthAdjust="spacingAndGlyphs" >processed pseudogene</text>
<rect x="131" y="547" width="215" height="14" fill="#398ec9" />
<rect x="346" y="547" width="758" height="14" fill="#03589c" />
<text x="200.6" y="556.2" font-family="Liberation Sans" font-size="10.2" font-weight="normal" fill="#fff" text-anchor="start" textLength="75.4" lengthAdjust="spacingAndGlyphs" >&lt; AC006209.25</text>
<text x="687.6" y="556.2" font-family="Liberation Sans" font-size="10.2" font-weight="normal" fill="#fff" text-anchor="start" textLength="69.4" lengthAdjust="spacingAndGlyphs" >AC006040.3 &gt;</text>
<text x="13.8" y="528" font-family="Liberation Sans" font-size="10.6" font-weight="normal" fill="#000" text-anchor="start" textLength="34.5" lengthAdjust="spacingAndGlyphs" >Genes</text>
<text x="13.8" y="540.4" font-family="Liberation Sans" font-size="10.6" font-weight="normal" fill="#000" text-anchor="start" textLength="107" lengthAdjust="spacingAndGlyphs" >(Comprehensive ...</text>
<text x="13.8" y="559.5" font-family="Liberation Sans" font-size="10.6" font-weight="normal" fill="#000" text-anchor="start" textLength="41.4" lengthAdjust="spacingAndGlyphs" >Contigs</text>
<text x="13.8" y="580" font-family="Liberation Sans" font-size="10.6" font-weight="normal" fill="#000" text-anchor="start" textLength="34.5" lengthAdjust="spacingAndGlyphs" >Genes</text>
<text x="13.8" y="592.4" font-family="Liberation Sans" font-size="10.6" font-weight="normal" fill="#000" text-anchor="start" textLength="107" lengthAdjust="spacingAndGlyphs" >(Comprehensive ...</text>
<text x="13.8" y="703.5" font-family="Liberation Sans" font-size="10.6" font-weight="normal" fill="#000" text-anchor="start" textLength="76" lengthAdjust="spacingAndGlyphs" >Gene Legend</text>
<line x1="14" y1="542.3" x2="121" y2="542.3" stroke="#3d6bb0" stroke-width="1" stroke-dasharray="2,1"/>
<line x1="14" y1="561.2" x2="57" y2="561.2" stroke="#3d6bb0" stroke-width="1" stroke-dasharray="2,1"/>
<line x1="14" y1="594.2" x2="121" y2="594.2" stroke="#3d6bb0" stroke-width="1" stroke-dasharray="2,1"/>
<line x1="14" y1="705.3" x2="90" y2="705.3" stroke="#3d6bb0" stroke-width="1" stroke-dasharray="2,1"/>
<rect x="597" y="563" width="81" height="35" fill="#ccff99" />
<rect x="597.5" y="564" width="6" height="6.5" fill="none" stroke="#cd9b1d" stroke-width="1"/>
<rect x="632.5" y="564" width="4.5" height="6.5" fill="none" stroke="#cd9b1d" stroke-width="1"/>
<rect x="603" y="563.5" width="30" height="7.5" fill="#cd9b1d" />
<text x="597" y="583.9" font-family="Liberation Sans" font-size="10.6" font-weight="normal" fill="#cd9b1d" text-anchor="start" textLength="53" lengthAdjust="spacingAndGlyphs" >&lt; SRY-001</text>
<text x="597" y="596.2" font-family="Liberation Sans" font-size="10.6" font-weight="normal" fill="#cd9b1d" text-anchor="start" textLength="75" lengthAdjust="spacingAndGlyphs" >protein coding</text>
<rect x="603" y="601" width="30" height="8.5" fill="#9b0000" />
<text x="603.6" y="621.9" font-family="Liberation Sans" font-size="10.6" font-weight="normal" fill="#9b0000" text-anchor="start" textLength="53" lengthAdjust="spacingAndGlyphs" >&lt; SRY-201</text>
<text x="603.6" y="633.9" font-family="Liberation Sans" font-size="10.6" font-weight="normal" fill="#9b0000" text-anchor="start" textLength="74.4" lengthAdjust="spacingAndGlyphs" >protein coding</text>
<rect x="131" y="637" width="30" height="4" fill="#000" />
<rect x="132" y="638" width="29" height="2" fill="#fff" />
<rect x="161" y="637" width="116" height="4" fill="#000" />
<rect x="277" y="637" width="117" height="4" fill="#000" />
<rect x="278" y="638" width="116" height="2" fill="#fff" />
<rect x="394" y="637" width="116" height="4" fill="#000" />
<rect x="510" y="637" width="117" height="4" fill="#000" />
<rect x="511" y="638" width="116" height="2" fill="#fff" />
<rect x="627" y="637" width="116" height="4" fill="#000" />
<rect x="743" y="637" width="117" height="4" fill="#000" />
<rect x="744" y="638" width="116" height="2" fill="#fff" />
<rect x="860" y="637" width="116" height="4" fill="#000" />
<rect x="976" y="637" width="117" height="4" fill="#000" />
<rect x="977" y="638" width="116" height="2" fill="#fff" />
<rect x="1093" y="637" width="11" height="4" fill="#000" />
<rect x="161" y="641" width="1" height="4" fill="#000" />
<text x="161" y="651.8" font-family="Liberation Sans" font-size="9.6" font-weight="normal" fill="#000" text-anchor="start" textLength="48" lengthAdjust="spacingAndGlyphs" >2,777,500</text>
<rect x="277" y="641" width="1" height="4" fill="#000" />
<text x="277" y="651.8" font-family="Liberation Sans" font-size="9.6" font-weight="normal" fill="#000" text-anchor="start" textLength="48" lengthAdjust="spacingAndGlyphs" >2,780,000</text>
<rect x="394" y="641" width="1" height="4" fill="#000" />
<text x="394" y="651.8" font-family="Liberation Sans" font-size="9.6" font-weight="normal" fill="#000" text-anchor="start" textLength="48" lengthAdjust="spacingAndGlyphs" >2,782,500</text>
<rect x="510" y="641" width="1" height="4" fill="#000" />
<text x="510" y="651.8" font-family="Liberation Sans" font-size="9.6" font-weight="normal" fill="#000" text-anchor="start" textLength="48" lengthAdjust="spacingAndGlyphs" >2,785,000</text>
<rect x="627" y="641" width="1" height="4" fill="#000" />
<text x="627" y="651.8" font-family="Liberation Sans" font-size="9.6" font-weight="normal" fill="#000" text-anchor="start" textLength="48" lengthAdjust="spacingAndGlyphs" >2,787,500</text>
<rect x="743" y="641" width="1" height="4" fill="#000" />
<text x="743" y="651.8" font-family="Liberation Sans" font-size="9.6" font-weight="normal" fill="#000" text-anchor="start" textLength="48" lengthAdjust="spacingAndGlyphs" >2,790,000</text>
<rect x="860" y="641" width="1" height="4" fill="#000" />
<text x="860" y="651.8" font-family="Liberation Sans" font-size="9.6" font-weight="normal" fill="#000" text-anchor="start" textLength="48" lengthAdjust="spacingAndGlyphs" >2,792,500</text>
<rect x="976" y="641" width="1" height="4" fill="#000" />
<text x="976" y="651.8" font-family="Liberation Sans" font-size="9.6" font-weight="normal" fill="#000" text-anchor="start" textLength="48" lengthAdjust="spacingAndGlyphs" >2,795,000</text>
<rect x="1093" y="641" width="1" height="4" fill="#000" />
<text x="1093" y="651.8" font-family="Liberation Sans" font-size="9.6" font-weight="normal" fill="#000" text-anchor="start" textLength="15" lengthAdjust="spacingAndGlyphs" >2,7</text>
<rect x="226.5" y="660" width="366" height="1" fill="#000" />
<rect x="641" y="660" width="463" height="1" fill="#000" />
<rect x="1103" y="657" width="1" height="7" fill="#000" />
<text x="595.8" y="662.6" font-family="Liberation Sans" font-size="10.4" font-weight="normal" fill="#000" text-anchor="start" textLength="41.5" lengthAdjust="spacingAndGlyphs" >20.84 kb</text>
<path d="M131,659.7 h6 v-0.7 h6 v-1.5 h6 v-0.6 h1.3 v7 h-1.3 v-0.6 h-6 v-1.5 h-6 v-0.7 h-6 z" fill="#000"/>
<text x="151.8" y="662.8" font-family="Liberation Sans" font-size="10.2" font-weight="normal" fill="#000" text-anchor="start" textLength="71.5" lengthAdjust="spacingAndGlyphs" >Reverse strand</text>
<rect x="131" y="699" width="973" height="1" fill="#888" />
<text x="131" y="714.8" font-family="Liberation Sans" font-size="11.8" font-weight="normal" fill="#000" text-anchor="start" textLength="88.4" lengthAdjust="spacingAndGlyphs" >Protein Coding</text>
<text x="454.6" y="714.8" font-family="Liberation Sans" font-size="11.8" font-weight="normal" fill="#000" text-anchor="start" textLength="116" lengthAdjust="spacingAndGlyphs" >Non-Protein Coding</text>
<rect x="131" y="722" width="21" height="9" fill="#9b0000" />
<text x="159.5" y="729.8" font-family="Liberation Sans" font-size="10.4" font-weight="normal" fill="#000" text-anchor="start" textLength="130.5" lengthAdjust="spacingAndGlyphs" >Ensembl protein coding</text>
<rect x="131" y="737" width="21" height="9" fill="#cd9b1d" />
<text x="159.5" y="744.8" font-family="Liberation Sans" font-size="10.4" font-weight="normal" fill="#000" text-anchor="start" textLength="140" lengthAdjust="spacingAndGlyphs" >merged Ensembl/Havana</text>
<rect x="131" y="749" width="46" height="5" fill="#fff" />
<rect x="455" y="722" width="21" height="9" fill="#8b668b" />
<text x="483.7" y="729.8" font-family="Liberation Sans" font-size="10.4" font-weight="normal" fill="#000" text-anchor="start" textLength="53.8" lengthAdjust="spacingAndGlyphs" >RNA gene</text>
<rect x="455" y="737" width="21" height="9" fill="#666666" />
<text x="483.7" y="744.8" font-family="Liberation Sans" font-size="10.4" font-weight="normal" fill="#000" text-anchor="start" textLength="68" lengthAdjust="spacingAndGlyphs" >pseudogene</text>
</svg></body></html>
